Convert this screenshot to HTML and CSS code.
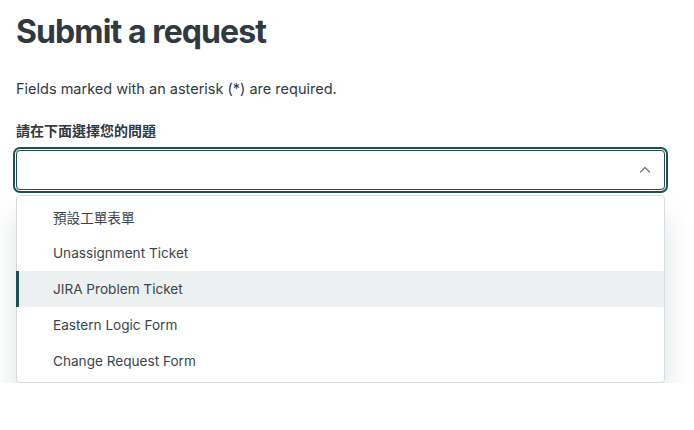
FILE: index.html
```html
<!DOCTYPE html>
<html lang="zh-Hant">
<head>
<meta charset="utf-8">
<title>Submit a request</title>
<link rel="stylesheet" href="styles.css">
</head>
<body>
<main class="page">
  <h1 class="title">Submit a request</h1>
  <p class="note">Fields marked with an asterisk (*) are required.</p>
  <div class="field">
    <label class="label">請在下面選擇您的問題</label>
    <div class="combo">
      <div class="select">
        <svg class="chevron" width="12" height="12" viewBox="0 0 12 12" aria-hidden="true">
          <path d="M1.5 8 L6 3.5 L10.5 8" fill="none" stroke="#68737d" stroke-width="1.2" stroke-linecap="round" stroke-linejoin="round"/>
        </svg>
      </div>
      <ul class="menu">
        <li class="item">預設工單表單</li>
        <li class="item">Unassignment Ticket</li>
        <li class="item active">JIRA Problem Ticket</li>
        <li class="item">Eastern Logic Form</li>
        <li class="item">Change Request Form</li>
      </ul>
    </div>
  </div>
</main>
</body>
</html>
```

FILE: styles.css
```css
* { box-sizing: border-box; }
html, body { margin: 0; padding: 0; background: #fff; }
body {
  font-family: Inter, "Noto Sans CJK TC", "Noto Sans", sans-serif;
  color: #2f3941;
}
.page {
  width: 665px;
  padding: 12px 0 0 16px;
}
.title {
  margin: 0;
  font-size: 32px;
  line-height: 40px;
  font-weight: 700;
  color: #2f3941;
  letter-spacing: -0.9px;
}
.note {
  margin: 27px 0 0;
  font-size: 14.5px;
  line-height: 20px;
  color: #2f3941;
}
.field { margin-top: 22px; }
.label {
  display: block;
  font-size: 14px;
  line-height: 20px;
  font-weight: 600;
  color: #2f3941;
}
.combo { margin-top: 9px; }
.select {
  height: 40px;
  border: 1px solid #1f4f4f;
  border-radius: 4px;
  box-shadow: 0 0 0 1px #fff, 0 0 0 3px #1f4f4f;
  display: flex;
  align-items: center;
  justify-content: flex-end;
  padding-right: 13px;
}
.chevron { display: block; }
.menu {
  list-style: none;
  margin: 5px 0 0;
  padding: 3px 0;
  border: 1px solid #d8dcde;
  border-radius: 4px;
  background: #fff;
  box-shadow: 0 20px 28px 0 rgba(4, 68, 77, 0.15);
}
.item {
  height: 36px;
  display: flex;
  align-items: center;
  padding-left: 36px;
  font-size: 13.6px;
  color: #3a444c;
}
.active {
  background: #edf0f0;
  box-shadow: inset 3px 0 0 #1f4f4f;
  margin-left: -1px;
  padding-left: 37px;
}
```
